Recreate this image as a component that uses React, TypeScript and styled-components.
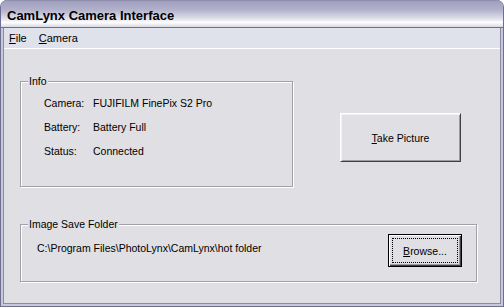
import { createGlobalStyle } from 'styled-components';
import styled from 'styled-components';

const GlobalStyle = createGlobalStyle`
  html, body {
    margin: 0;
    padding: 0;
    background: #ffffff;
  }
  body {
    font-family: "Liberation Sans", Arial, sans-serif;
    font-size: 11px;
    color: #000;
  }
`;

const Window = styled.div`
  width: 504px;
  height: 307px;
  box-sizing: border-box;
  display: flex;
  flex-direction: column;
  background: #e0dfe3;
  border: 1px solid #6f6e93;
  border-top: none;
  border-radius: 7px 7px 0 0;
  overflow: hidden;
  box-shadow: inset 0 0 0 2px #c9c8d6, inset 0 0 0 3px #8b8aa8;
`;

const TitleBar = styled.div`
  height: 28px;
  flex-shrink: 0;
  display: flex;
  align-items: center;
  padding: 3px 0 0 6px;
  box-sizing: border-box;
  border-top: 1px solid #8e8dac;
  border-bottom: 1px solid #6f6e93;
  background: linear-gradient(
    to bottom,
    #9f9ebd 0%,
    #b3b2cc 35%,
    #e6e6ee 72%,
    #ffffff 82%,
    #d9d9e3 100%
  );
`;

const Title = styled.span`
  font-family: "Liberation Sans", Arial, sans-serif;
  font-weight: bold;
  font-size: 13px;
  color: #000;
`;

const MenuBar = styled.div`
  height: 20px;
  flex-shrink: 0;
  display: flex;
  align-items: center;
  gap: 8px;
  margin: 0 3px;
  padding-left: 3px;
  background: #dfe1eb;
  border-bottom: 1px solid #ffffff;
`;

const MenuItem = styled.span`
  padding: 0 2px;
`;

const Client = styled.div`
  flex: 1;
  margin: 0 3px 3px;
  padding: 32px 0 0 16px;
  display: flex;
  flex-direction: column;
  gap: 37px;
  font-size: 10.5px;
`;

const TopRow = styled.div`
  display: flex;
  align-items: flex-start;
  gap: 47px;
`;

const Group = styled.div<{ $w: number; $h: number }>`
  position: relative;
  width: ${(p) => p.$w}px;
  height: ${(p) => p.$h}px;
  box-sizing: border-box;
  border: 1px solid #a2a1a8;
  box-shadow: 1px 1px 0 #ffffff, inset 1px 1px 0 #ffffff;
`;

const GroupLabel = styled.span`
  position: absolute;
  left: 7px;
  top: -7px;
  padding: 0 1px;
  background: #e0dfe3;
  line-height: 13px;
`;

const InfoList = styled.div`
  padding: 9px 0 0 23px;
  display: flex;
  flex-direction: column;
`;

const InfoRow = styled.div`
  height: 24px;
  display: flex;
  align-items: center;
`;

const InfoLabel = styled.span`
  width: 49px;
`;

const FolderBody = styled.div`
  height: 100%;
  display: flex;
  align-items: flex-start;
  justify-content: space-between;
  padding: 9px 14px 0 16px;
  box-sizing: border-box;
`;

const FolderPath = styled.span`
  margin-top: 8px;
`;

const Button = styled.button<{ $w: number; $h: number; $default?: boolean }>`
  width: ${(p) => p.$w}px;
  height: ${(p) => p.$h}px;
  flex-shrink: 0;
  margin-top: ${(p) => (p.$default ? 0 : 32)}px;
  font-family: "Liberation Sans", Arial, sans-serif;
  font-size: 10.5px;
  color: #000;
  background: #e0dfe3;
  padding: 0;
  position: relative;
  border: 1px solid ${(p) => (p.$default ? '#000' : '#e0dfe3')};
  border-top-color: ${(p) => (p.$default ? '#000' : '#ffffff')};
  border-left-color: ${(p) => (p.$default ? '#000' : '#ffffff')};
  border-right-color: ${(p) => (p.$default ? '#000' : '#404040')};
  border-bottom-color: ${(p) => (p.$default ? '#000' : '#404040')};
  box-shadow: ${(p) =>
    p.$default
      ? 'inset 1px 1px 0 #ffffff, inset -1px -1px 0 #404040, inset -2px -2px 0 #9d9da1'
      : 'inset 1px 1px 0 #f1f0f3, inset -1px -1px 0 #9d9da1'};
`;

const FocusRing = styled.span`
  position: absolute;
  inset: 3px;
  border: 1px dotted #000;
  display: flex;
  align-items: center;
  justify-content: center;
`;

export default function App() {
  return (
    <>
      <GlobalStyle />
      <Window>
        <TitleBar>
          <Title>CamLynx Camera Interface</Title>
        </TitleBar>
        <MenuBar>
          <MenuItem>
            <u>F</u>ile
          </MenuItem>
          <MenuItem>
            <u>C</u>amera
          </MenuItem>
        </MenuBar>
        <Client>
          <TopRow>
            <Group $w={273} $h={106}>
              <GroupLabel>Info</GroupLabel>
              <InfoList>
                <InfoRow>
                  <InfoLabel>Camera:</InfoLabel>
                  <span>FUJIFILM FinePix S2 Pro</span>
                </InfoRow>
                <InfoRow>
                  <InfoLabel>Battery:</InfoLabel>
                  <span>Battery Full</span>
                </InfoRow>
                <InfoRow>
                  <InfoLabel>Status:</InfoLabel>
                  <span>Connected</span>
                </InfoRow>
              </InfoList>
            </Group>
            <Button $w={121} $h={49}>
              <u>T</u>ake Picture
            </Button>
          </TopRow>
          <Group $w={457} $h={58}>
            <GroupLabel>Image Save Folder</GroupLabel>
            <FolderBody>
              <FolderPath>C:\Program Files\PhotoLynx\CamLynx\hot folder</FolderPath>
              <Button $w={74} $h={33} $default>
                <FocusRing>
                  <span>
                    <u>B</u>rowse...
                  </span>
                </FocusRing>
              </Button>
            </FolderBody>
          </Group>
        </Client>
      </Window>
    </>
  );
}
